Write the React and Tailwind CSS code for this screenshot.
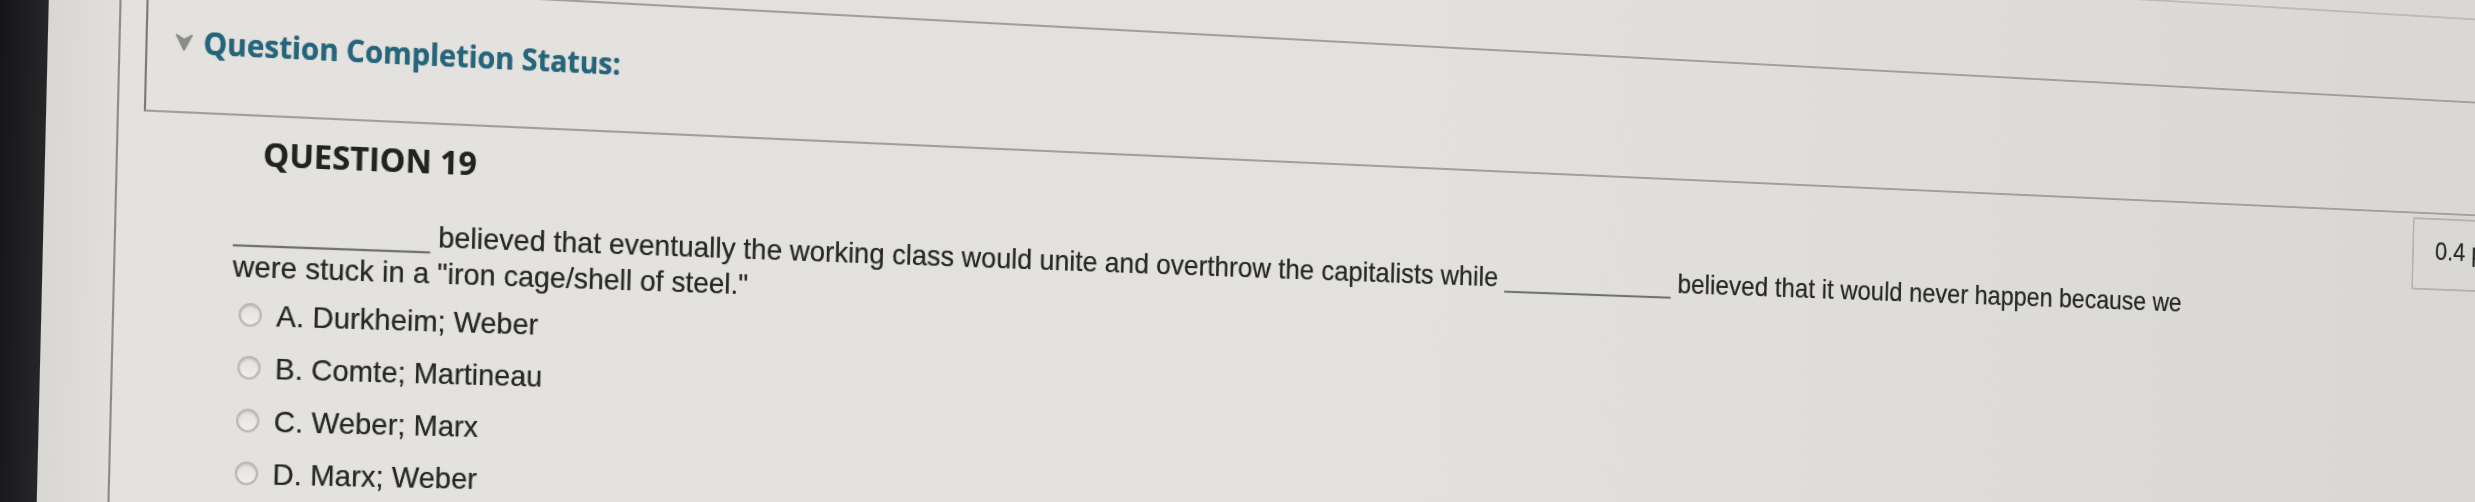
import React from 'react';

const options = ['A. Durkheim; Weber', 'B. Comte; Martineau', 'C. Weber; Marx', 'D. Marx; Weber'];

function Radio() {
  return (
    <span className="w-[22px] h-[22px] shrink-0 mb-[3px] -ml-[1px] rounded-full border-2 border-[#b9b8b5] bg-linear-to-b from-[#e2e1de] to-[#f0efec] shadow-[inset_0_1px_2px_rgba(0,0,0,0.15)]" />
  );
}

function Chevron() {
  return (
    <svg width="18" height="17" viewBox="0 0 18 17" className="shrink-0 -ml-[1px]">
      <path d="M1 2 Q1 0.5 2.5 1.2 L9 5 L15.5 1.2 Q17 0.5 17 2 L10 15.5 Q9 17 8 15.5 Z" fill="#8c8c8c" />
    </svg>
  );
}

export default function App() {
  return (
    <div className="w-[2475px] h-[502px] overflow-hidden bg-[#1c1c1e]">
      {/* the page is laid out flat, then warped to the photo's perspective */}
      <div className="w-[2720px] h-[620px] flex origin-top-left [transform:matrix3d(1.09834,0.05667,0,0.0000701,-0.02633,1.0968,0,0,0,0,1,0,-6.529,-162,0,1)]">
        {/* monitor bezel */}
        <div className="w-[54px] shrink-0 bg-linear-to-r from-[#121214] to-[#262628]" />
        <div className="w-[64.5px] shrink-0 bg-linear-to-r from-[#d8d7d4] to-[#e0dfdc]" />

        <main className="flex-1 flex flex-col border-l-2 border-[#8d8c8a] bg-linear-to-r from-[#e3e2df] via-[#e2e1dd] to-[#d8d7d3] font-['Liberation_Sans',Arial,sans-serif] text-[#262626] [text-shadow:0_0_0.7px_rgba(30,30,30,0.55)]">
          <div className="ml-[1300px] mt-[29px] h-[2px] shrink-0 bg-[#bcbbb8]" />

          {/* Question Completion Status box */}
          <section className="ml-[23.5px] mt-[88px] h-[124px] shrink-0 border-2 border-r-0 border-[#a19f9c] border-l-[#7a7977] pt-[37px] pl-[26px]">
            <div className="flex items-center gap-[9px] h-[38px]">
              <Chevron />
              <h2 className="font-['Open_Sans',sans-serif] font-bold text-[28px] leading-[38px] text-[#21667d]">
                Question Completion Status:
              </h2>
            </div>
          </section>

          <div className="mt-[2px] flex justify-between items-start shrink-0">
            <h3 className="ml-[136px] mt-[12px] font-['Open_Sans',sans-serif] font-bold text-[31px] leading-[40px] text-[#222]">
              QUESTION 19
            </h3>
            <div className="mt-[2px] w-[109px] h-[78px] border-2 border-r-0 border-[#b3b2af] rounded-l-[3px] pl-[27px] pt-[18px] text-[28px] leading-[32px] whitespace-nowrap overflow-hidden">
              0.4 points
            </div>
          </div>

          <p className="mt-[6.5px] ml-[110px] w-[2128px] text-[28px] leading-[34px]">
            <span className="text-[#6e6e6e]">____________</span> believed that eventually the working class would unite and overthrow the capitalists while{' '}
            <span className="text-[#6e6e6e]">____________</span> believed that it would never happen because we were stuck in a "iron cage/shell of steel."
          </p>

          <div className="mt-[4px] ml-[117px] flex flex-col">
            {options.map((opt) => (
              <label key={opt} className="h-[49px] flex items-center gap-[14px] text-[28px] leading-[34px]">
                <Radio />
                <span>{opt}</span>
              </label>
            ))}
          </div>
        </main>
      </div>
    </div>
  );
}
